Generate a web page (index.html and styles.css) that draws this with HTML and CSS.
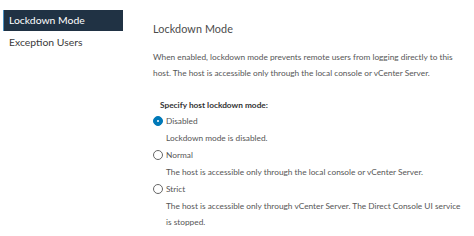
FILE: index.html
```html
<!DOCTYPE html>
<html lang="en">
<head>
<meta charset="UTF-8" />
<meta name="viewport" content="width=device-width, initial-scale=1" />
<title>Lockdown Mode</title>
<link rel="stylesheet" href="styles.css">
</head>
<body>

  <div class="layout">
    <nav class="sidebar">
      <div class="nav-item active">Lockdown Mode</div>
      <div class="nav-item">Exception Users</div>
    </nav>

    <main class="content">
      <h2 class="title">Lockdown Mode</h2>
      <p class="intro">When enabled, lockdown mode prevents remote users from logging directly to this host. The host is accessible only through the local console or vCenter Server.</p>

      <div class="mode-group">
        <div class="group-label">Specify host lockdown mode:</div>

        <label class="option">
          <span class="radio checked"></span>
          <span>Disabled</span>
        </label>
        <div class="option-desc">Lockdown mode is disabled.</div>

        <label class="option">
          <span class="radio"></span>
          <span>Normal</span>
        </label>
        <div class="option-desc">The host is accessible only through the local console or vCenter Server.</div>

        <label class="option">
          <span class="radio"></span>
          <span>Strict</span>
        </label>
        <div class="option-desc">The host is accessible only through vCenter Server. The Direct Console UI service is stopped.</div>
      </div>
    </main>
  </div>

</body>
</html>
```

FILE: styles.css
```css
body {
  margin: 0;
  padding: 0;
  background: #fff;
  font-family: 'Lato', 'Open Sans', sans-serif;
  color: #565656;
  font-size: 8.3px;
}

.layout {
  display: flex;
}

/* Barra lateral */
.sidebar {
  width: 120px;
  padding: 10px 0 0 3px;
  flex-shrink: 0;
}

.nav-item {
  height: 21px;
  line-height: 21px;
  padding-left: 6px;
  font-size: 10.4px;
  color: #3a3a3a;
}

.nav-item + .nav-item {
  margin-top: 1px;
}

.nav-item.active {
  background: #203244;
  color: #fff;
  border-left: 1px solid #4a8fc0;
  padding-left: 5px;
}

/* Contenido */
.content {
  padding: 21px 0 0 30px;
  flex: 1;
}

.title {
  margin: 0;
  font-size: 10.8px;
  font-weight: normal;
  letter-spacing: 0.1px;
  color: #4a4a4a;
  line-height: 16px;
}

.intro {
  margin: 12px 0 0;
  line-height: 16px;
  width: 318px;
}

.mode-group {
  margin-top: 16px;
}

.group-label {
  font-weight: bold;
  color: #333;
  padding-left: 7px;
  line-height: 16px;
}

.option {
  display: flex;
  align-items: center;
  gap: 3px;
  line-height: 16px;
  color: #555;
}

.radio {
  width: 8px;
  height: 8px;
  border: 1px solid #666;
  border-radius: 50%;
  box-sizing: content-box;
}

.radio.checked {
  background: #0079b8;
  border-color: #0079b8;
  position: relative;
}

.radio.checked::after {
  content: '';
  position: absolute;
  left: 3px;
  top: 3px;
  width: 2px;
  height: 2px;
  background: #fff;
  border-radius: 50%;
}

.option-desc {
  padding-left: 13px;
  line-height: 16px;
  margin: 1px 0 1px;
  width: 300px;
}
```
